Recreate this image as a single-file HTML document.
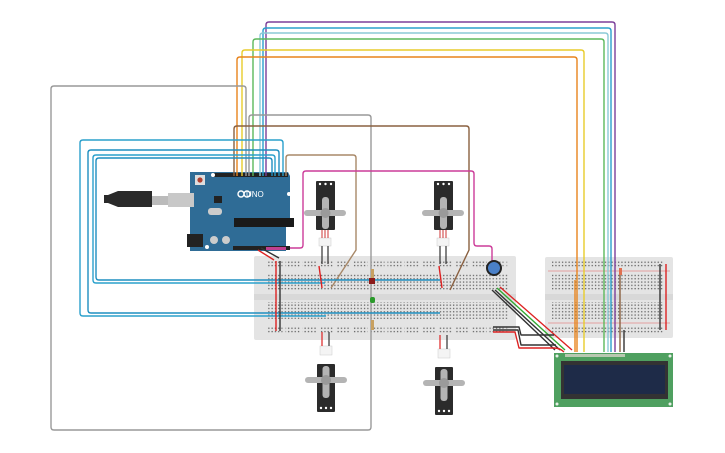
<!DOCTYPE html>
<html><head><meta charset="utf-8"><style>
html,body{margin:0;padding:0;background:#fff;width:725px;height:453px;overflow:hidden}
svg{display:block}
</style></head><body>
<svg width="725" height="453" viewBox="0 0 725 453" xmlns="http://www.w3.org/2000/svg" font-family="Liberation Sans, sans-serif">
<defs>
<pattern id="holes" x="0" y="0" width="3.3" height="3.3" patternUnits="userSpaceOnUse">
<rect x="0.9" y="0.9" width="1.3" height="1.3" fill="#666"/>
</pattern>
</defs>
<!-- breadboard 1 -->
<rect x="254" y="256" width="262" height="84" rx="2" fill="#e4e4e4"/>
<rect x="254" y="294" width="262" height="6" fill="#d8d8d8"/>
<g fill="url(#holes)">
<rect x="268" y="261" width="240" height="7"/>
<rect x="268" y="273" width="240" height="17"/>
<rect x="268" y="302" width="240" height="17"/>
<rect x="268" y="326" width="240" height="7"/>
</g>
<g stroke="#e4e4e4" stroke-width="3">
<path d="M284 259v10M301 259v10M318 259v10M335 259v10M352 259v10M369 259v10M386 259v10M403 259v10M420 259v10M437 259v10M454 259v10M471 259v10M488 259v10M505 259v10"/>
<path d="M284 324v10M301 324v10M318 324v10M335 324v10M352 324v10M369 324v10M386 324v10M403 324v10M420 324v10M437 324v10M454 324v10M471 324v10M488 324v10M505 324v10"/>
</g>
<!-- breadboard 2 -->
<rect x="545" y="257" width="128" height="81" rx="2" fill="#e4e4e4"/>
<rect x="545" y="294" width="128" height="6" fill="#d8d8d8"/>
<line x1="548" y1="271" x2="670" y2="271" stroke="#e5a0a0" stroke-width="1"/>
<line x1="548" y1="323" x2="670" y2="323" stroke="#e5a0a0" stroke-width="1"/>
<g fill="url(#holes)">
<rect x="552" y="261" width="112" height="7"/>
<rect x="552" y="274" width="112" height="17"/>
<rect x="552" y="302" width="112" height="17"/>
<rect x="552" y="326" width="112" height="7"/>
</g>
<!-- LCD -->
<rect x="554" y="353" width="119" height="54" fill="#4fa060"/>
<rect x="561" y="361" width="107" height="38" fill="#333"/>
<rect x="564" y="365" width="101" height="29" fill="#1e2b48"/>
<g fill="#e8f0e8"><circle cx="557" cy="356" r="1.5"/><circle cx="670" cy="356" r="1.5"/><circle cx="557" cy="404" r="1.5"/><circle cx="670" cy="404" r="1.5"/></g>
<rect x="565" y="354" width="60" height="3" fill="#b8c8b0"/>
<!-- Arduino -->
<path d="M190 172h98l2 4v46l-4 4v25h-96z" fill="#2f6c96"/>
<rect x="187" y="234" width="16" height="13" fill="#222"/>
<rect x="168" y="193" width="26" height="14" fill="#c8c8c8"/>
<rect x="152" y="196" width="16" height="9" fill="#bbb"/>
<path d="M118 191h34v16h-34l-10-4h-4v-8h4z" fill="#2a2a2a"/>
<circle cx="108" cy="199" r="4" fill="#2a2a2a"/>
<rect x="195" y="175" width="10" height="10" fill="#ddd"/><circle cx="200" cy="180" r="2.6" fill="#b04030"/>
<rect x="213" y="173" width="75" height="4" fill="#222"/>
<rect x="234" y="218" width="60" height="9" fill="#1a1a1a"/>
<rect x="233" y="246" width="57" height="4" fill="#222"/>
<rect x="266" y="247" width="20" height="3" fill="#c04090"/>
<rect x="208" y="208" width="14" height="7" rx="3" fill="#ccc"/>
<rect x="214" y="196" width="8" height="7" fill="#222"/>
<circle cx="214" cy="240" r="4" fill="#ccc"/><circle cx="226" cy="240" r="4" fill="#ccc"/>
<text x="246" y="197" font-size="8" fill="#fff">UNO</text>
<g fill="none" stroke="#fff" stroke-width="1.4"><circle cx="241" cy="194" r="3"/><circle cx="247" cy="194" r="3"/></g>
<circle cx="213" cy="175" r="2" fill="#fff"/><circle cx="289" cy="194" r="2" fill="#fff"/><circle cx="207" cy="247" r="2" fill="#fff"/>
<!-- wires -->
<g fill="none" stroke-width="1.4" stroke-linejoin="round">
<path d="M266 176V25q0-3 3-3h343q3 0 3 3V352" stroke="#7b3f9a"/>
<path d="M263 176V31q0-3 3-3h342q3 0 3 3V352" stroke="#2aa0cc"/>
<path d="M260 176V36q0-3 3-3h342q3 0 3 3V352" stroke="#8ccad6"/>
<path d="M253 176V42q0-3 3-3h345q3 0 3 3V352" stroke="#5cb85c"/>
<path d="M242 176V53q0-3 3-3h336q3 0 3 3V352" stroke="#e8cc2c"/>
<path d="M237 176V60q0-3 3-3h334q3 0 3 3V352" stroke="#e8841c"/>
<path d="M246 176V89q0-3-3-3H54q-3 0-3 3v338q0 3 3 3h314q3 0 3-3V118q0-3-3-3H252q-3 0-3 3V176" stroke="#999"/>
<path d="M234 176V129q0-3 3-3h229q3 0 3 3V250L450 290" stroke="#8a6040"/>
<path d="M286 176V158q0-3 3-3h64q3 0 3 3V250L331 288" stroke="#a88868"/>
<path d="M290 248h10q3 0 3-3V174q0-3 3-3h165q3 0 3 3V243q0 3 3 3h12q3 0 3 3v14" stroke="#cc3c99"/>
<path d="M283 176V143q0-3-3-3H83q-3 0-3 3v170q0 3 3 3h243" stroke="#2aa0cc"/>
<path d="M279 176V153q0-3-3-3H91q-3 0-3 3v157q0 3 3 3h349" stroke="#1f8fc0"/>
<path d="M275 176V158q0-3-3-3H96q-3 0-3 3v122q0 3 3 3h229" stroke="#2aa0cc"/>
<path d="M272 176V161q0-3-3-3H99q-3 0-3 3v116q0 3 3 3h341" stroke="#1f8fc0"/>
<path d="M258 250L274 260" stroke="#d22"/>
<path d="M261 248L279 258" stroke="#333"/>
<path d="M276 261V331" stroke="#d22"/><path d="M280 261V331" stroke="#333"/>
<path d="M319 266L322 288M439 266L442 288" stroke="#d22"/>
<path d="M492 290L555 350M495 290L560 350" stroke="#333"/>
<path d="M497 288L565 350" stroke="#3a3"/>
<path d="M500 287L572 350" stroke="#d22"/>
<path d="M493 330h25l3 15h35M493 327h26l2 8h33" stroke="#333"/>
<path d="M493 332h22l4 16h35q6 0 10 4" stroke="#d22"/>
<path d="M666 264V330" stroke="#d22"/><path d="M660 264V330" stroke="#333"/>
<path d="M620 272V352" stroke="#8a6040"/><path d="M624 330V352" stroke="#333"/>
<path d="M575 280V352" stroke="#e8841c"/>
</g>
<rect x="619" y="268" width="3" height="7" fill="#e07050"/>
<!-- components -->
<rect x="371" y="269" width="3" height="10" fill="#c8a060"/>
<rect x="369" y="278" width="6" height="6" fill="#8b1a1a"/>
<rect x="370" y="297" width="5" height="6" rx="2" fill="#2a9a2a"/>
<rect x="371" y="320" width="3" height="10" fill="#c8a060"/>
<circle cx="494" cy="268" r="8" fill="#222"/><circle cx="494" cy="268" r="6" fill="#4a80c8"/>
<!-- servos -->
<g id="s1">
<rect x="316" y="181" width="19" height="49" rx="1" fill="#2b2b2b"/>
<g fill="#fff"><circle cx="320" cy="184" r="1.2"/><circle cx="325.5" cy="184" r="1.2"/><circle cx="331" cy="184" r="1.2"/></g>
<rect x="304" y="210" width="42" height="6" rx="3" fill="#b4b4b4"/>
<rect x="322" y="197" width="7" height="32" rx="3" fill="#b4b4b4"/>
<circle cx="325.5" cy="213" r="5" fill="#9a9a9a"/>
<rect x="319" y="238" width="12" height="8" fill="#f4f4f4" stroke="#ccc" stroke-width="0.5"/>
<path d="M322 230v8M325 230v8M328 230v8" stroke="#c33" stroke-width="1"/>
<path d="M322 246v18M328 246v18" stroke="#333" stroke-width="1.2"/>
</g>
<use href="#s1" x="118"/>
<g id="s2">
<rect x="317" y="364" width="18" height="48" rx="1" fill="#2b2b2b"/>
<g fill="#fff"><circle cx="321" cy="408" r="1.2"/><circle cx="326" cy="408" r="1.2"/><circle cx="331" cy="408" r="1.2"/></g>
<rect x="305" y="377" width="42" height="6" rx="3" fill="#b4b4b4"/>
<rect x="322.5" y="366" width="7" height="32" rx="3" fill="#b4b4b4"/>
<circle cx="326" cy="380" r="5" fill="#9a9a9a"/>
<rect x="320" y="346" width="12" height="9" fill="#f4f4f4" stroke="#ccc" stroke-width="0.5"/>
<path d="M322 332v14" stroke="#d22" stroke-width="1.2"/><path d="M329 332v14" stroke="#333" stroke-width="1.2"/>
</g>
<use href="#s2" x="118" y="3"/>
</svg>
</body></html>
